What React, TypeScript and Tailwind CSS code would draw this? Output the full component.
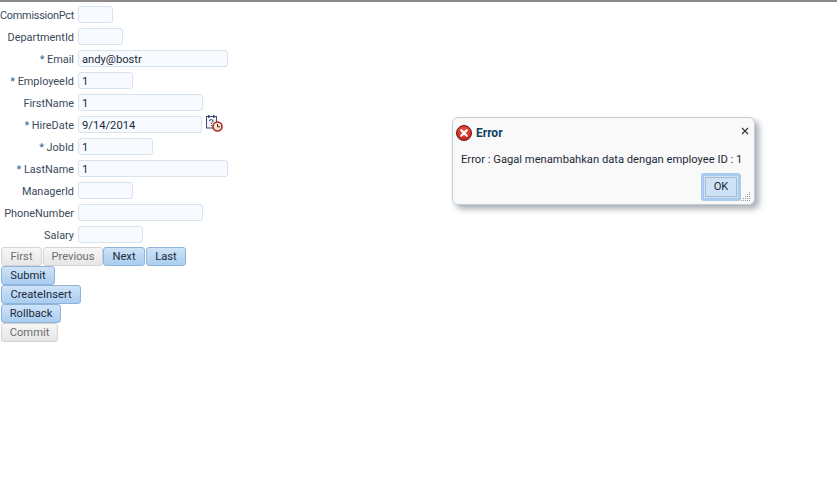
import React from "react";

const rows = [
  { label: "CommissionPct", width: "w-[35px]", value: "", tight: true },
  { label: "DepartmentId", width: "w-[45px]", value: "" },
  { label: "Email", width: "w-[150px]", value: "andy@bostr", required: true },
  { label: "EmployeeId", width: "w-[55px]", value: "1", required: true },
  { label: "FirstName", width: "w-[125px]", value: "1" },
  { label: "HireDate", width: "w-[124px]", value: "9/14/2014", required: true, date: true },
  { label: "JobId", width: "w-[75px]", value: "1", required: true },
  { label: "LastName", width: "w-[150px]", value: "1", required: true },
  { label: "ManagerId", width: "w-[55px]", value: "" },
  { label: "PhoneNumber", width: "w-[125px]", value: "" },
  { label: "Salary", width: "w-[65px]", value: "" },
];

function DateIcon() {
  return (
    <svg width="18" height="18" viewBox="0 0 18 18" className="ml-[3px] mt-[-2px] shrink-0">
      <rect x="1.5" y="2.5" width="10" height="11.5" fill="#f1f3f8" stroke="#3d4a75" />
      <rect x="3" y="1" width="1.5" height="3" fill="#3d4a75" />
      <rect x="8" y="1" width="1.5" height="3" fill="#3d4a75" />
      <path d="M4.5 7 Q4.5 5.5 6.3 5.5 Q8 5.5 8 7 Q8 8 6.4 9 V10 M6.4 11 V12.2" fill="none" stroke="#3d4a75" />
      <circle cx="12.5" cy="12.5" r="4.5" fill="#f4e6d8" stroke="#b3261e" strokeWidth="1.6" />
      <path d="M12.5 10 V12.8 H15" fill="none" stroke="#5a1a14" />
    </svg>
  );
}

function Btn({ label, enabled, className }: { label: string; enabled: boolean; className: string }) {
  return (
    <div
      className={`h-[19px] rounded-[3px] border flex items-center justify-center text-[11.2px] leading-none ${className} ${
        enabled
          ? "border-[#8fb4d9] bg-gradient-to-b from-[#cfe3f7] to-[#a9cdf0] text-[#1c2a3a]"
          : "border-[#d4d4d4] bg-gradient-to-b from-[#f6f6f6] to-[#e6e6e6] text-[#6d6d6d]"
      }`}
    >
      {label}
    </div>
  );
}

export default function App() {
  return (
    <div className="relative w-[837px] h-[477px] overflow-hidden bg-white font-['Roboto',sans-serif] text-[11.2px] text-[#20303f]">
      <div className="h-[2px] bg-[#8a8a8a]" />

      <div className="pt-[4px] flex flex-col gap-[5px]">
        {rows.map((r) => (
          <div key={r.label} className="flex items-start h-[17px]">
            <div
              className={`w-[74px] flex justify-end text-[10.9px] leading-[20px] whitespace-pre text-[#3a4a5a] ${
                r.tight ? "tracking-[-0.25px]" : ""
              }`}
            >
              {r.required && <span className="text-[#2f5f8f]">* </span>}
              {r.label}
            </div>
            <div
              className={`ml-[4px] h-[17px] rounded-[3px] border border-[#d9e3ec] bg-[#f7fbff] px-[3px] leading-[17px] text-[#1c2a3a] ${r.width}`}
            >
              {r.value}
            </div>
            {r.date && <DateIcon />}
          </div>
        ))}
      </div>

      <div className="ml-[1px] mt-[4px] flex flex-col">
        <div className="flex gap-[1px]">
          <Btn label="First" enabled={false} className="w-[41px]" />
          <Btn label="Previous" enabled={false} className="w-[60px]" />
          <Btn label="Next" enabled className="w-[42px] ml-[-1px]" />
          <Btn label="Last" enabled className="w-[40px]" />
        </div>
        <Btn label="Submit" enabled className="w-[54px]" />
        <Btn label="CreateInsert" enabled className="w-[80px]" />
        <Btn label="Rollback" enabled className="w-[60px]" />
        <Btn label="Commit" enabled={false} className="w-[57px]" />
      </div>

      {/* message popup */}
      <div className="absolute left-[452px] top-[117px] w-[303px] h-[88px] rounded-[6px] border border-[#c4ccd6] bg-[#f9f9f9] shadow-[4px_4px_6px_rgba(110,120,130,0.6)]">
        <div className="flex items-center pl-[3px] pt-[6px]">
          <svg width="16" height="16" viewBox="0 0 16 16">
            <defs>
              <radialGradient id="errRed" cx="50%" cy="35%" r="65%">
                <stop offset="0%" stopColor="#f0584a" />
                <stop offset="100%" stopColor="#c21f16" />
              </radialGradient>
            </defs>
            <circle cx="8" cy="8" r="7.5" fill="url(#errRed)" stroke="#6f1a14" />
            <path d="M5.2 5.2 L10.8 10.8 M10.8 5.2 L5.2 10.8" stroke="#ffffff" strokeWidth="2.2" strokeLinecap="round" />
          </svg>
          <span className="ml-[4px] text-[12px] font-bold text-[#0f3f5f]">Error</span>
          <svg width="8" height="8" viewBox="0 0 8 8" className="ml-auto mr-[5px] mt-[-5px]">
            <path d="M1 1 L7 7 M7 1 L1 7" stroke="#333333" strokeWidth="1.1" />
          </svg>
        </div>
        <div className="ml-[8px] mt-[10px] whitespace-nowrap text-[#1c2a3a]">
          Error : Gagal menambahkan data dengan employee ID : 1
        </div>
        <div className="absolute left-[248px] top-[55px] w-[40px] h-[28px] rounded-[3px] border-[3px] border-[#a8cbee] bg-[#cfe2f5] p-[1px]">
          <div className="h-full w-full border border-[#a9bccd] flex items-center justify-center text-[#1c2a3a]">OK</div>
        </div>
        <svg width="10" height="10" viewBox="0 0 10 10" className="absolute right-[3px] bottom-[2px]">
          {[[8, 0], [6, 2], [8, 2], [4, 4], [6, 4], [8, 4], [2, 6], [4, 6], [6, 6], [8, 6], [0, 8], [2, 8], [4, 8], [6, 8], [8, 8]].map(([x, y]) => (
            <rect key={`${x}-${y}`} x={x} y={y} width="1" height="1" fill="#9a9a9a" />
          ))}
        </svg>
      </div>
    </div>
  );
}
